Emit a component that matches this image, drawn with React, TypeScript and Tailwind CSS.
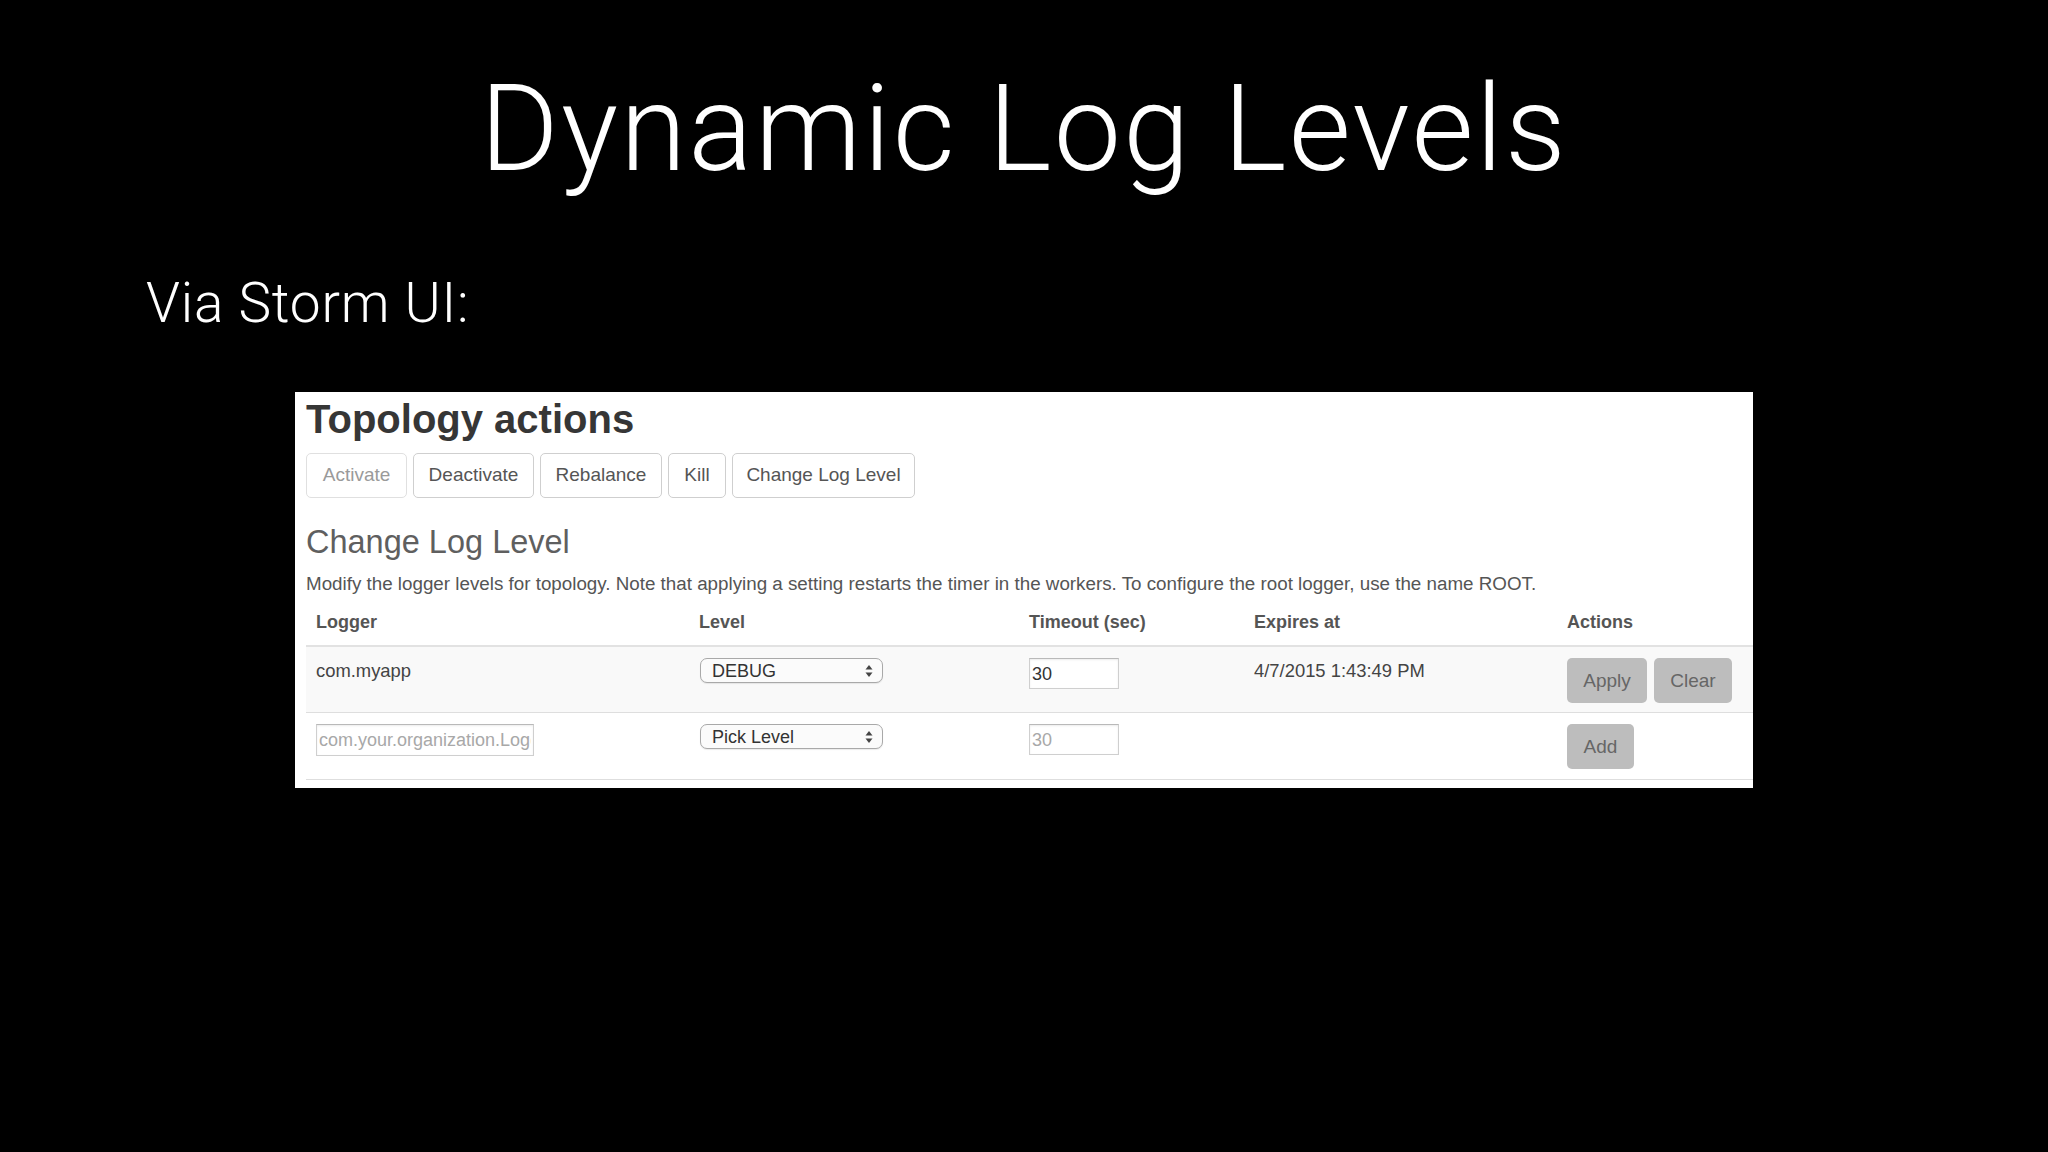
import React from 'react'

const ui = { fontFamily: '"Liberation Sans", Arial, sans-serif' }
const light = { fontFamily: 'Roboto, "Liberation Sans", sans-serif' }

const topButtons = [
  { label: 'Activate', w: 'w-[101px]', muted: true },
  { label: 'Deactivate', w: 'w-[121px]' },
  { label: 'Rebalance', w: 'w-[122px]' },
  { label: 'Kill', w: 'w-[58px]' },
  { label: 'Change Log Level', w: 'w-[183px]' },
]

function SelectBox({ value }: { value: string }) {
  return (
    <div className="flex items-center justify-between w-[183px] h-[25px] rounded-[7px] border border-[#a9a9a9] bg-[#fbfbfb] pl-[11px] pr-[9px] shadow-[0_1px_1px_rgba(0,0,0,0.08)]">
      <span className="text-[18px] leading-none text-[#333]">{value}</span>
      {/* up/down arrows */}
      <svg width="8" height="14" viewBox="0 0 8 14">
        <path d="M4 1 L7.5 5.5 L0.5 5.5 Z" fill="#444" />
        <path d="M4 13 L7.5 8.5 L0.5 8.5 Z" fill="#444" />
      </svg>
    </div>
  )
}

function TimeoutInput({ value, placeholder }: { value?: string; placeholder?: boolean }) {
  return (
    <div className="w-[90px] h-[31px] border border-[#cfcfcf] border-t-[#b9b9b9] bg-white shadow-[inset_0_1px_2px_rgba(0,0,0,0.08)] flex items-center pl-[2px]">
      <span className={`text-[18px] leading-none ${placeholder ? 'text-[#a8a8a8]' : 'text-[#333]'}`}>{value}</span>
    </div>
  )
}

function GrayButton({ label, w }: { label: string; w: string }) {
  return (
    <div className={`${w} h-[45px] rounded-[5px] bg-[#bdbdbd] flex items-center justify-center text-[19px] text-[#666]`}>
      {label}
    </div>
  )
}

export default function App() {
  return (
    <div className="w-[2048px] h-[1152px] bg-black overflow-hidden flex flex-col">
      {/* Slide title */}
      <h1 className="pt-[69px] text-center text-[120px] leading-none font-light tracking-[2.2px] text-white" style={light}>
        Dynamic Log Levels
      </h1>
      <p className="mt-[87px] pl-[146px] text-[55px] leading-none font-light tracking-[0.8px] text-white" style={light}>
        Via Storm UI:
      </p>

      {/* Storm UI screenshot */}
      <div className="mt-[61px] ml-[295px] w-[1458px] h-[396px] bg-white pl-[11px] flex flex-col" style={ui}>
        <h2 className="mt-[5px] text-[40px] leading-[44px] font-bold text-[#363636]">Topology actions</h2>

        <div className="mt-[12px] flex gap-[6px]">
          {topButtons.map((b) => (
            <div
              key={b.label}
              className={`${b.w} h-[45px] rounded-[5px] border ${b.muted ? 'border-[#e0e0e0] text-[#9a9a9a]' : 'border-[#cfcfcf] text-[#555]'} flex items-center justify-center text-[19px]`}
            >
              {b.label}
            </div>
          ))}
        </div>

        <h3 className="mt-[26px] text-[32.5px] leading-[36px] text-[#5f5f5f]">Change Log Level</h3>
        <p className="mt-[12px] text-[18.8px] leading-[24px] text-[#555]">
          Modify the logger levels for topology. Note that applying a setting restarts the timer in the workers. To configure the root logger, use the name ROOT.
        </p>

        {/* Table */}
        <div className="mt-[3px] flex flex-col">
          <div className="grid grid-cols-[383px_330px_225px_313px_1fr] h-[48px] border-b-2 border-[#e2e2e2] pt-[11px] text-[18px] leading-[24px] font-bold text-[#555]">
            <div className="pl-[10px]">Logger</div>
            <div className="pl-[10px]">Level</div>
            <div className="pl-[10px]">Timeout (sec)</div>
            <div className="pl-[10px]">Expires at</div>
            <div className="pl-[10px]">Actions</div>
          </div>

          <div className="grid grid-cols-[383px_330px_225px_313px_1fr] h-[66px] border-b border-[#dedede] bg-[#f9f9f9] pt-[11px] text-[18.4px] leading-[24px] text-[#444]">
            <div className="pl-[10px] pt-[1px]">com.myapp</div>
            <div className="pl-[11px]">
              <SelectBox value="DEBUG" />
            </div>
            <div className="pl-[10px]">
              <TimeoutInput value="30" />
            </div>
            <div className="pl-[10px] pt-[1px]">4/7/2015 1:43:49 PM</div>
            <div className="pl-[10px] flex gap-[7px]">
              <GrayButton label="Apply" w="w-[80px]" />
              <GrayButton label="Clear" w="w-[78px]" />
            </div>
          </div>

          <div className="grid grid-cols-[383px_330px_225px_313px_1fr] h-[67px] border-b border-[#dedede] pt-[11px] text-[18px] leading-[24px] text-[#444]">
            <div className="pl-[10px]">
              <input
                readOnly
                placeholder="com.your.organization.LoggerName"
                className="w-[218px] h-[32px] border border-[#cfcfcf] border-t-[#b9b9b9] bg-white px-[2px] text-[18px] text-[#333] placeholder:text-[#a8a8a8] shadow-[inset_0_1px_2px_rgba(0,0,0,0.08)] outline-none"
                style={ui}
              />
            </div>
            <div className="pl-[11px]">
              <SelectBox value="Pick Level" />
            </div>
            <div className="pl-[10px]">
              <TimeoutInput value="30" placeholder />
            </div>
            <div />
            <div className="pl-[10px]">
              <GrayButton label="Add" w="w-[67px]" />
            </div>
          </div>
        </div>
      </div>
    </div>
  )
}
